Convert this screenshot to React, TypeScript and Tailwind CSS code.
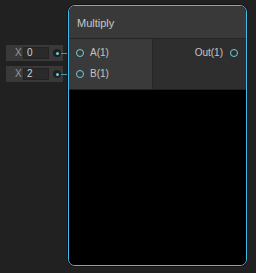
import React from "react";

function Stub({ top, value }: { top: number; value: string }) {
  return (
    <div
      className="absolute left-[6px] w-[57px] h-[16px] bg-[#393939] flex items-center"
      style={{ top }}
    >
      <span className="ml-[9px] w-[8px] text-[10px] leading-none text-[#9a9a9a]">X</span>
      <div className="ml-[0px] w-[26px] h-[12px] bg-[#2a2a2a] border border-[#232323] flex items-center pl-[3px] text-[10px] leading-none text-[#d0d0d0]">
        {value}
      </div>
      <div className="ml-[4px] w-[8px] h-[8px] rounded-full bg-[#1f1f1f] flex items-center justify-center">
        <div className="w-[3px] h-[3px] rounded-full bg-[#5fd0e0]" />
      </div>
    </div>
  );
}

function Port({ label }: { label: string }) {
  return (
    <div className="h-[21px] flex items-center">
      <div className="ml-[7px] w-[8px] h-[8px] rounded-full border-[1.5px] border-[#6fd0dc]" />
      <span className="ml-[6px] text-[10px] leading-none text-[#c4c4c4]">{label}</span>
    </div>
  );
}

export default function App() {
  return (
    <div className="relative w-[256px] h-[273px] bg-[#212121] overflow-hidden font-['Liberation_Sans',sans-serif]">
      <Stub top={45} value="0" />
      <Stub top={66} value="2" />
      <div className="absolute left-[61px] top-[53px] w-[15px] h-[1px] bg-[#4a9aa8]" />
      <div className="absolute left-[61px] top-[74px] w-[15px] h-[1px] bg-[#4a9aa8]" />
      <div className="absolute left-[67px] top-[4px] w-[181px] h-[263px] rounded-[8px] border border-[#151515]">
        <div className="w-full h-full rounded-[7px] border border-[#43bbee] bg-black flex flex-col overflow-hidden">
          <div className="h-[33px] shrink-0 bg-[#393939] border-b border-[#262626] flex items-center pl-[8px] pt-[3px] text-[11px] text-[#c8c8c8]">
            Multiply
          </div>
          <div className="h-[50px] shrink-0 flex">
            <div className="w-[84px] bg-[#3a3a3a] border-r border-[#262626] pt-[3px]">
              <Port label="A(1)" />
              <Port label="B(1)" />
            </div>
            <div className="flex-1 bg-[#2e2e2e] pt-[3px]">
              <div className="h-[21px] flex items-center justify-end pr-[8px]">
                <span className="text-[10px] leading-none text-[#c4c4c4]">Out(1)</span>
                <div className="ml-[7px] w-[8px] h-[8px] rounded-full border-[1.5px] border-[#6fd0dc]" />
              </div>
            </div>
          </div>
          <div className="h-[1px] bg-[#202020]" />
          <div className="flex-1 bg-black" />
        </div>
      </div>
    </div>
  );
}
